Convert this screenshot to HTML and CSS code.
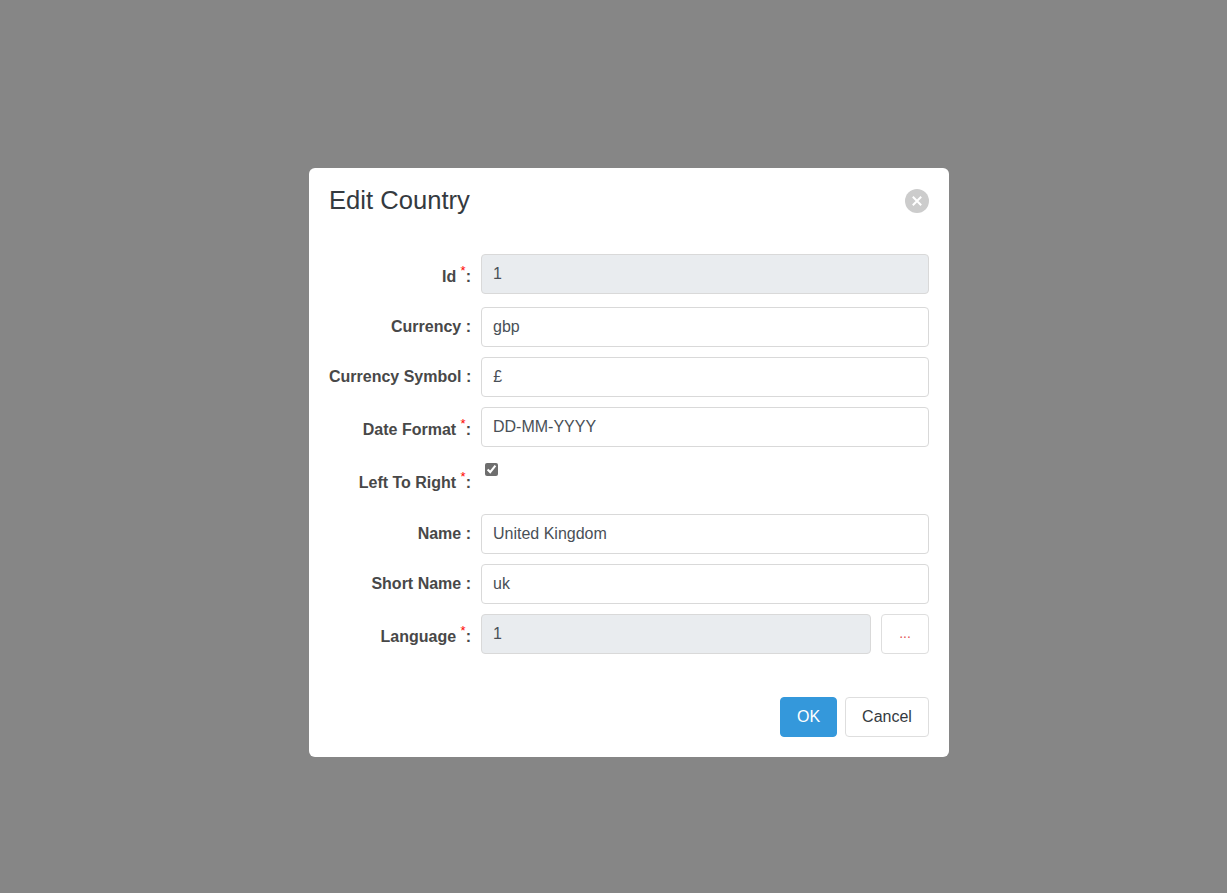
FILE: index.html

```html
<!DOCTYPE html>
<html lang="en">
<head>
    <meta charset="UTF-8">
    <meta name="viewport" content="width=device-width, initial-scale=1.0">
    <title>Edit Country</title>
    <link rel="stylesheet" href="styles.css">
</head>
<body>

<!-- Edit Country Modal -->
<div class="overlay">
    <div class="modal">
        <div class="modal-header">
            <h2>Edit Country</h2>
            <button class="close-btn" type="button" aria-label="Close">
                <svg width="10" height="10" viewBox="0 0 10 10"><path d="M0.8 0.8L9.2 9.2M9.2 0.8L0.8 9.2" stroke="#fff" stroke-width="2" fill="none"/></svg>
            </button>
        </div>

        <form class="modal-body">
            <div class="form-row">
                <label class="form-label">Id <sup class="required">*</sup>:</label>
                <input class="form-input" type="text" value="1" disabled>
            </div>
            <div class="form-row">
                <label class="form-label">Currency :</label>
                <input class="form-input" type="text" value="gbp">
            </div>
            <div class="form-row">
                <label class="form-label">Currency Symbol :</label>
                <input class="form-input" type="text" value="£">
            </div>
            <div class="form-row">
                <label class="form-label">Date Format <sup class="required">*</sup>:</label>
                <input class="form-input" type="text" value="DD-MM-YYYY">
            </div>
            <div class="form-row check-row">
                <label class="form-label">Left To Right <sup class="required">*</sup>:</label>
                <input class="form-check" type="checkbox" checked>
            </div>
            <div class="form-row">
                <label class="form-label">Name :</label>
                <input class="form-input" type="text" value="United Kingdom">
            </div>
            <div class="form-row">
                <label class="form-label">Short Name :</label>
                <input class="form-input" type="text" value="uk">
            </div>
            <div class="form-row">
                <label class="form-label">Language <sup class="required">*</sup>:</label>
                <input class="form-input" type="text" value="1" disabled>
                <button class="lookup-btn" type="button">...</button>
            </div>
        </form>

        <div class="modal-footer">
            <button class="btn btn-ok" type="button">OK</button>
            <button class="btn btn-cancel" type="button">Cancel</button>
        </div>
    </div>
</div>

</body>
</html>
```

FILE: styles.css

```css
body {
    margin: 0;
    font-family: "Liberation Sans", Arial, sans-serif;
    font-size: 16px;
    color: #495057;
}

.overlay {
    height: 893px;
    padding-top: 168px;
    box-sizing: border-box;
    background-color: #868686;
}

.modal {
    width: 640px;
    height: 589px;
    margin-left: 309px;
    box-sizing: border-box;
    padding: 0 20px;
    background-color: white;
    border-radius: 6px;
}

/* Header */
.modal-header {
    display: flex;
    justify-content: space-between;
    height: 86px;
}

.modal-header h2 {
    margin: 16px 0 0;
    font-size: 25.6px;
    font-weight: 400;
    line-height: 32px;
    color: #343a40;
}

.close-btn {
    display: flex;
    align-items: center;
    justify-content: center;
    width: 24px;
    height: 24px;
    margin-top: 21px;
    padding: 0;
    border: none;
    border-radius: 50%;
    background-color: #ccc;
}

/* Form rows */
.form-row {
    display: flex;
    align-items: flex-start;
    gap: 10px;
    margin-bottom: 10px;
}

.check-row {
    margin-bottom: 11px;
}

.form-label {
    flex: 0 0 142px;
    padding: 8px 0;
    font-weight: 700;
    line-height: 24px;
    text-align: right;
    white-space: nowrap;
    color: #484848;
}

.required {
    font-size: 13px;
    font-weight: 400;
    line-height: 18px;
    vertical-align: 7px;
    color: red;
}

.form-input {
    flex: 1;
    min-width: 0;
    height: 40px;
    box-sizing: border-box;
    padding: 0 11px;
    border: 1px solid #d9d9d9;
    border-radius: 4px;
    background-color: white;
    font-family: inherit;
    font-size: 16px;
    color: #495057;
}

.form-input:disabled {
    background-color: #e9ecef;
    opacity: 1;
}

.form-check {
    width: 13px;
    height: 13px;
    margin: 3px 0 0 4px;
    accent-color: #6e6e6e;
}

.lookup-btn {
    flex: 0 0 48px;
    height: 40px;
    padding: 0 0 2px;
    border: 1px solid #dedede;
    border-radius: 4px;
    background-color: white;
    font-family: inherit;
    font-size: 14px;
    color: #e25555;
}

/* Footer */
.modal-footer {
    display: flex;
    justify-content: flex-end;
    gap: 8px;
    margin-top: 40px;
}

.btn {
    height: 40px;
    box-sizing: border-box;
    border-radius: 4px;
    font-family: inherit;
    font-size: 16px;
}

.btn-ok {
    width: 57px;
    border: 1px solid #3498db;
    background-color: #3498db;
    color: white;
}

.btn-cancel {
    width: 84px;
    border: 1px solid #dedede;
    background-color: white;
    color: #343a40;
}
```
